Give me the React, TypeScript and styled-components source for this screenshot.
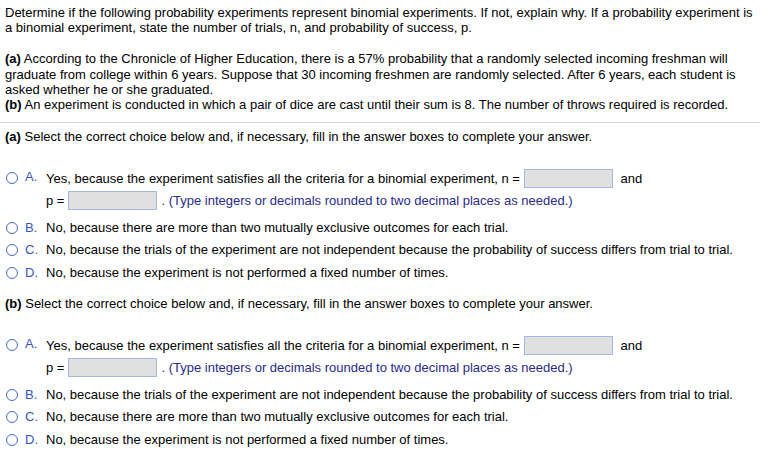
import styled, { createGlobalStyle } from "styled-components";

const GlobalStyle = createGlobalStyle`
  body {
    margin: 0;
    background: #ffffff;
    font-family: "Liberation Sans", Arial, sans-serif;
    font-size: 13px;
    color: #000000;
  }
`;

const Page = styled.div`
  width: 760px;
  height: 460px;
  overflow: hidden;
  padding-top: 5px;
  box-sizing: border-box;
`;

const Question = styled.div`
  padding: 0 5px;
  line-height: 15.4px;
`;

const Paragraph = styled.p<{ $gap?: number }>`
  margin: 0 0 ${(p) => p.$gap ?? 0}px 0;
`;

const Divider = styled.hr`
  border: none;
  border-top: 1px solid #cdd3e2;
  margin: 9px 0 0 0;
`;

const Part = styled.div<{ $top: number }>`
  padding: ${(p) => p.$top}px 5px 0 5px;
`;

const Prompt = styled.div`
  line-height: 16px;
  margin-bottom: 23px;
`;

const Choices = styled.div`
  display: flex;
  flex-direction: column;
`;

const Choice = styled.div<{ $height: number }>`
  display: flex;
  align-items: flex-start;
  min-height: ${(p) => p.$height}px;
`;

const Radio = styled.span<{ $offset: number }>`
  flex: none;
  width: 10px;
  height: 10px;
  border: 1.6px solid #4968c8;
  border-radius: 50%;
  margin: ${(p) => p.$offset}px 0 0 1px;
`;

const Letter = styled.span<{ $top?: number }>`
  flex: none;
  width: 21px;
  margin-left: 7px;
  color: #3556bd;
  line-height: 16px;
  margin-top: ${(p) => p.$top ?? 0}px;
`;

const Body = styled.div`
  line-height: 16px;
`;

const Line = styled.div`
  display: flex;
  align-items: center;
  height: 22px;
`;

const AnswerBox = styled.span`
  display: inline-block;
  width: 87px;
  height: 17px;
  background: #e0e0e0;
  border: 1px solid #a3b9e6;
  margin: 0 4px 0 4px;
`;

const Hint = styled.span`
  color: #2a2a8a;
`;

const Bold = styled.b`
  font-weight: bold;
`;

type Option = { letter: string; text: string };

const partA: Option[] = [
  { letter: "B.", text: "No, because there are more than two mutually exclusive outcomes for each trial." },
  { letter: "C.", text: "No, because the trials of the experiment are not independent because the probability of success differs from trial to trial." },
  { letter: "D.", text: "No, because the experiment is not performed a fixed number of times." },
];

const partB: Option[] = [
  { letter: "B.", text: "No, because the trials of the experiment are not independent because the probability of success differs from trial to trial." },
  { letter: "C.", text: "No, because there are more than two mutually exclusive outcomes for each trial." },
  { letter: "D.", text: "No, because the experiment is not performed a fixed number of times." },
];

const ChoiceBlock = ({ others }: { others: Option[] }) => (
  <Choices>
    <Choice $height={52}>
      <Radio $offset={4} />
      <Letter $top={1}>A.</Letter>
      <Body>
        <Line>
          Yes, because the experiment satisfies all the criteria for a binomial experiment, n =
          <AnswerBox />
          &nbsp;and
        </Line>
        <Line>
          p =<AnswerBox />
          <Hint>. (Type integers or decimals rounded to two decimal places as needed.)</Hint>
        </Line>
      </Body>
    </Choice>
    {others.map((o) => (
      <Choice key={o.letter} $height={22.6}>
        <Radio $offset={2} />
        <Letter>{o.letter}</Letter>
        <Body>{o.text}</Body>
      </Choice>
    ))}
  </Choices>
);

export default function App() {
  return (
    <>
      <GlobalStyle />
      <Page>
        <Question>
          <Paragraph $gap={15.4}>
            Determine if the following probability experiments represent binomial experiments. If not, explain why. If a
            probability experiment is a binomial experiment, state the number of trials, n, and probability of success, p.
          </Paragraph>
          <Paragraph>
            <Bold>(a)</Bold> According to the Chronicle of Higher Education, there is a 57% probability that a randomly
            selected incoming freshman will graduate from college within 6 years. Suppose that 30 incoming freshmen are
            randomly selected. After 6 years, each student is asked whether he or she graduated.
          </Paragraph>
          <Paragraph>
            <Bold>(b)</Bold> An experiment is conducted in which a pair of dice are cast until their sum is 8. The number
            of throws required is recorded.
          </Paragraph>
        </Question>
        <Divider />
        <Part $top={6}>
          <Prompt>
            <Bold>(a)</Bold> Select the correct choice below and, if necessary, fill in the answer boxes to complete your
            answer.
          </Prompt>
          <ChoiceBlock others={partA} />
        </Part>
        <Part $top={8}>
          <Prompt>
            <Bold>(b)</Bold> Select the correct choice below and, if necessary, fill in the answer boxes to complete your
            answer.
          </Prompt>
          <ChoiceBlock others={partB} />
        </Part>
      </Page>
    </>
  );
}
